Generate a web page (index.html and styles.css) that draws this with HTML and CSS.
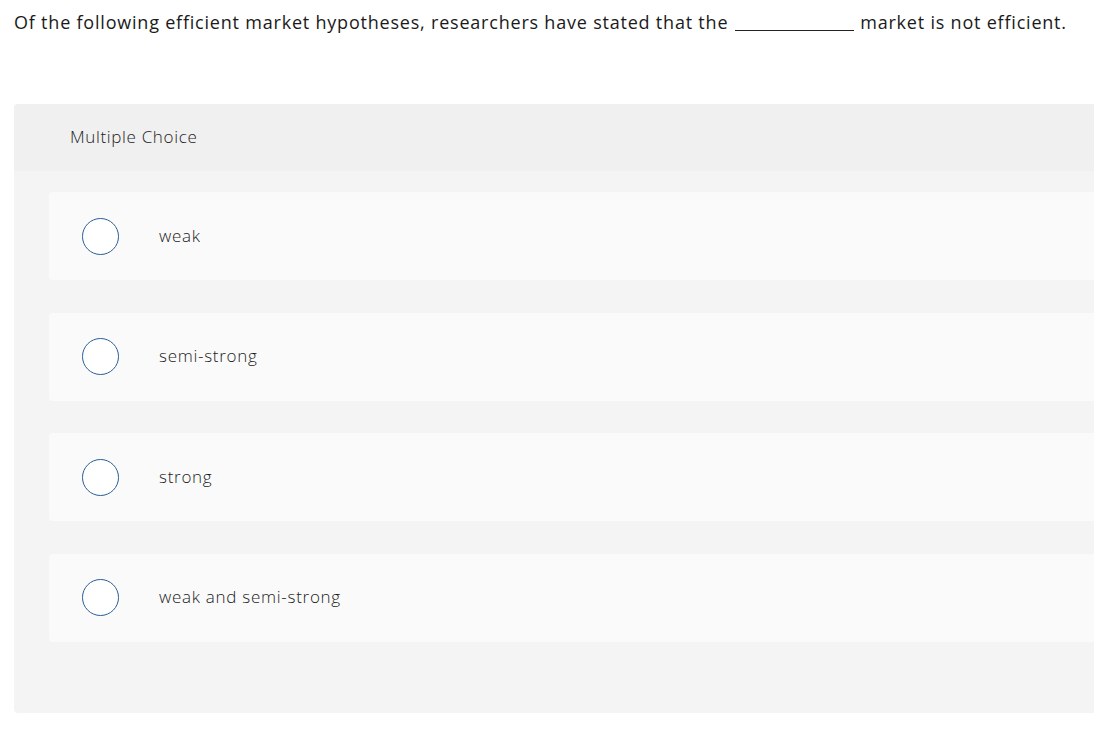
FILE: index.html
```html
<!DOCTYPE html>
<html lang="en">
<head>
    <meta charset="utf-8">
    <title>Multiple Choice</title>
    <link rel="stylesheet" href="styles.css">
</head>
<body>
    <p class="prompt">Of the following efficient market hypotheses, researchers have stated that the <span class="blank"></span> market is not efficient.</p>
    <div class="mc">
        <div class="mc-head">Multiple Choice</div>
        <div class="mc-body">
            <label class="opt"><span class="radio"></span><span class="opt-text">weak</span></label>
            <label class="opt"><span class="radio"></span><span class="opt-text">semi-strong</span></label>
            <label class="opt"><span class="radio"></span><span class="opt-text">strong</span></label>
            <label class="opt"><span class="radio"></span><span class="opt-text">weak and semi-strong</span></label>
        </div>
    </div>
</body>
</html>
```
FILE: styles.css
```css
html, body { margin: 0; padding: 0; background: #fff; overflow-x: hidden; }
body { font-family: "Open Sans", "Liberation Sans", sans-serif; color: #1a1a1a; }
.prompt { margin: 0; padding: 10px 0 0 14px; font-size: 18px; line-height: 24px; letter-spacing: 0.79px; white-space: nowrap; }
.blank { display: inline-block; width: 119px; border-bottom: 1px solid #222; margin: 0 1px 0 1px; vertical-align: -2px; }
.mc { margin: 70px -30px 0 14px; background: #f4f4f4; border-radius: 4px; }
.mc-head { height: 67px; line-height: 66px; padding-left: 56px; background: #f0f0f0; border-radius: 4px 4px 0 0; font-size: 17px; font-weight: 300; letter-spacing: 0.65px; color: #222; }
.mc-body { padding: 21px 0 39px 35px; }
.opt { display: flex; align-items: center; height: 88px; margin-bottom: 32.6px; background: #fafafa; border-radius: 4px; cursor: pointer; }
.radio { width: 35px; height: 35px; margin-left: 33px; border: 1px solid #2b5f97; border-radius: 50%; background: #fff; flex: none; }
.opt-text { margin-left: 40px; font-size: 17px; font-weight: 300; letter-spacing: 0.72px; color: #1a1a1a; padding-bottom: 2px; }
```
